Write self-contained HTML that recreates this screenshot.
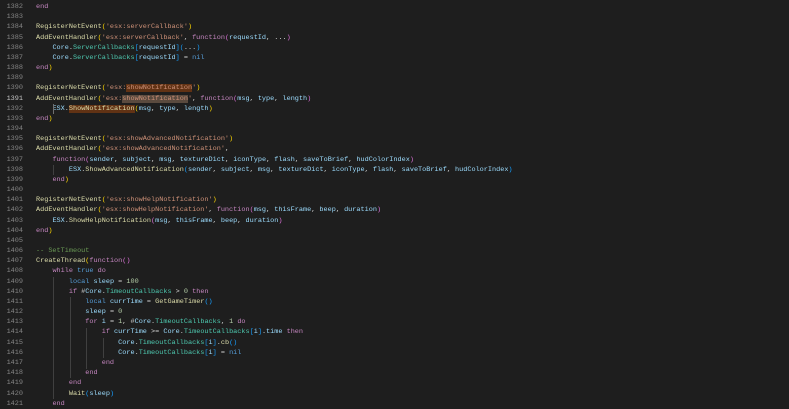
<!DOCTYPE html>
<html><head><meta charset="utf-8"><style>
html,body{margin:0;padding:0;background:#1e1e1e;width:789px;height:409px;overflow:hidden}
#ed{position:absolute;left:0;top:-8.2px;font-family:"Liberation Mono",monospace;font-size:6.85px;line-height:10.18px;color:#d4d4d4}
.l{height:10.18px;position:relative;white-space:pre}
.ln{position:absolute;left:0;width:23px;text-align:right;color:#858585}
.ln.a{color:#c6c6c6}
.c{position:absolute;left:36px}
.k{color:#c586c0}.f{color:#dcdcaa}.s{color:#ce9178}.v{color:#9cdcfe}.t{color:#4ec9b0}.n{color:#b5cea8}.m{color:#6a9955}.bk{color:#569cd6}
.b1{color:#ffd700}.b2{color:#da70d6}.b3{color:#179fff}
.h{background:#613214}.h2{background:#5a4a3e}
.g{position:absolute;width:1px;background:#404040}
</style></head><body>
<div id="ed"><div class="l"><span class="ln">1381</span><span class="c">    <span class="b1">)</span></span></div><div class="l"><span class="ln">1382</span><span class="c"><span class="k">end</span></span></div><div class="l"><span class="ln">1383</span></div><div class="l"><span class="ln">1384</span><span class="c"><span class="f">RegisterNetEvent</span><span class="b1">(</span><span class="s">'esx:serverCallback'</span><span class="b1">)</span></span></div><div class="l"><span class="ln">1385</span><span class="c"><span class="f">AddEventHandler</span><span class="b1">(</span><span class="s">'esx:serverCallback'</span>, <span class="k">function</span><span class="b2">(</span><span class="v">requestId</span>, ...<span class="b2">)</span></span></div><div class="l"><span class="ln">1386</span><span class="c">    <span class="v">Core</span>.<span class="t">ServerCallbacks</span><span class="b3">[</span><span class="v">requestId</span><span class="b3">]</span><span class="b3">(</span>...<span class="b3">)</span></span></div><div class="l"><span class="ln">1387</span><span class="c">    <span class="v">Core</span>.<span class="t">ServerCallbacks</span><span class="b3">[</span><span class="v">requestId</span><span class="b3">]</span> = <span class="bk">nil</span></span></div><div class="l"><span class="ln">1388</span><span class="c"><span class="k">end</span><span class="b1">)</span></span></div><div class="l"><span class="ln">1389</span></div><div class="l"><span class="ln">1390</span><span class="c"><span class="f">RegisterNetEvent</span><span class="b1">(</span><span class="s">'esx:<span class="h">showNotification</span>'</span><span class="b1">)</span></span></div><div class="l"><span class="ln a">1391</span><span class="c"><span class="f">AddEventHandler</span><span class="b1">(</span><span class="s">'esx:<span class="h2">showNotification</span>'</span>, <span class="k">function</span><span class="b2">(</span><span class="v">msg</span>, <span class="v">type</span>, <span class="v">length</span><span class="b2">)</span></span></div><div class="l"><span class="ln">1392</span><span class="c">    <span class="v">ESX</span>.<span class="f h">ShowNotification</span><span class="b1">(</span><span class="v">msg</span>, <span class="v">type</span>, <span class="v">length</span><span class="b1">)</span></span></div><div class="l"><span class="ln">1393</span><span class="c"><span class="k">end</span><span class="b1">)</span></span></div><div class="l"><span class="ln">1394</span></div><div class="l"><span class="ln">1395</span><span class="c"><span class="f">RegisterNetEvent</span><span class="b1">(</span><span class="s">'esx:showAdvancedNotification'</span><span class="b1">)</span></span></div><div class="l"><span class="ln">1396</span><span class="c"><span class="f">AddEventHandler</span><span class="b1">(</span><span class="s">'esx:showAdvancedNotification'</span>,</span></div><div class="l"><span class="ln">1397</span><span class="c">    <span class="k">function</span><span class="b2">(</span><span class="v">sender</span>, <span class="v">subject</span>, <span class="v">msg</span>, <span class="v">textureDict</span>, <span class="v">iconType</span>, <span class="v">flash</span>, <span class="v">saveToBrief</span>, <span class="v">hudColorIndex</span><span class="b2">)</span></span></div><div class="l"><span class="ln">1398</span><span class="c">        <span class="v">ESX</span>.<span class="f">ShowAdvancedNotification</span><span class="b3">(</span><span class="v">sender</span>, <span class="v">subject</span>, <span class="v">msg</span>, <span class="v">textureDict</span>, <span class="v">iconType</span>, <span class="v">flash</span>, <span class="v">saveToBrief</span>, <span class="v">hudColorIndex</span><span class="b3">)</span></span></div><div class="l"><span class="ln">1399</span><span class="c">    <span class="k">end</span><span class="b1">)</span></span></div><div class="l"><span class="ln">1400</span></div><div class="l"><span class="ln">1401</span><span class="c"><span class="f">RegisterNetEvent</span><span class="b1">(</span><span class="s">'esx:showHelpNotification'</span><span class="b1">)</span></span></div><div class="l"><span class="ln">1402</span><span class="c"><span class="f">AddEventHandler</span><span class="b1">(</span><span class="s">'esx:showHelpNotification'</span>, <span class="k">function</span><span class="b2">(</span><span class="v">msg</span>, <span class="v">thisFrame</span>, <span class="v">beep</span>, <span class="v">duration</span><span class="b2">)</span></span></div><div class="l"><span class="ln">1403</span><span class="c">    <span class="v">ESX</span>.<span class="f">ShowHelpNotification</span><span class="b2">(</span><span class="v">msg</span>, <span class="v">thisFrame</span>, <span class="v">beep</span>, <span class="v">duration</span><span class="b2">)</span></span></div><div class="l"><span class="ln">1404</span><span class="c"><span class="k">end</span><span class="b1">)</span></span></div><div class="l"><span class="ln">1405</span></div><div class="l"><span class="ln">1406</span><span class="c"><span class="m">-- SetTimeout</span></span></div><div class="l"><span class="ln">1407</span><span class="c"><span class="f">CreateThread</span><span class="b1">(</span><span class="k">function</span><span class="b2">()</span></span></div><div class="l"><span class="ln">1408</span><span class="c">    <span class="k">while</span> <span class="bk">true</span> <span class="k">do</span></span></div><div class="l"><span class="ln">1409</span><span class="c">        <span class="bk">local</span> <span class="v">sleep</span> = <span class="n">100</span></span></div><div class="l"><span class="ln">1410</span><span class="c">        <span class="k">if</span> #<span class="v">Core</span>.<span class="t">TimeoutCallbacks</span> &gt; <span class="n">0</span> <span class="k">then</span></span></div><div class="l"><span class="ln">1411</span><span class="c">            <span class="bk">local</span> <span class="v">currTime</span> = <span class="f">GetGameTimer</span><span class="b3">()</span></span></div><div class="l"><span class="ln">1412</span><span class="c">            <span class="v">sleep</span> = <span class="n">0</span></span></div><div class="l"><span class="ln">1413</span><span class="c">            <span class="k">for</span> <span class="v">i</span> = <span class="n">1</span>, #<span class="v">Core</span>.<span class="t">TimeoutCallbacks</span>, <span class="n">1</span> <span class="k">do</span></span></div><div class="l"><span class="ln">1414</span><span class="c">                <span class="k">if</span> <span class="v">currTime</span> &gt;= <span class="v">Core</span>.<span class="t">TimeoutCallbacks</span><span class="b3">[</span><span class="v">i</span><span class="b3">]</span>.<span class="v">time</span> <span class="k">then</span></span></div><div class="l"><span class="ln">1415</span><span class="c">                    <span class="v">Core</span>.<span class="t">TimeoutCallbacks</span><span class="b3">[</span><span class="v">i</span><span class="b3">]</span>.<span class="f">cb</span><span class="b3">()</span></span></div><div class="l"><span class="ln">1416</span><span class="c">                    <span class="v">Core</span>.<span class="t">TimeoutCallbacks</span><span class="b3">[</span><span class="v">i</span><span class="b3">]</span> = <span class="bk">nil</span></span></div><div class="l"><span class="ln">1417</span><span class="c">                <span class="k">end</span></span></div><div class="l"><span class="ln">1418</span><span class="c">            <span class="k">end</span></span></div><div class="l"><span class="ln">1419</span><span class="c">        <span class="k">end</span></span></div><div class="l"><span class="ln">1420</span><span class="c">        <span class="f">Wait</span><span class="b3">(</span><span class="v">sleep</span><span class="b3">)</span></span></div><div class="l"><span class="ln">1421</span><span class="c">    <span class="k">end</span></span></div></div>
<div class="g" style="left:53px;top:104px;height:10px;background:#707070"></div>
<div class="g" style="left:53px;top:165px;height:10px"></div>
<div class="g" style="left:53px;top:277px;height:122px"></div>
<div class="g" style="left:70px;top:297px;height:81px"></div>
<div class="g" style="left:86px;top:328px;height:41px"></div>
<div class="g" style="left:103px;top:338px;height:20px"></div>
</body></html>
